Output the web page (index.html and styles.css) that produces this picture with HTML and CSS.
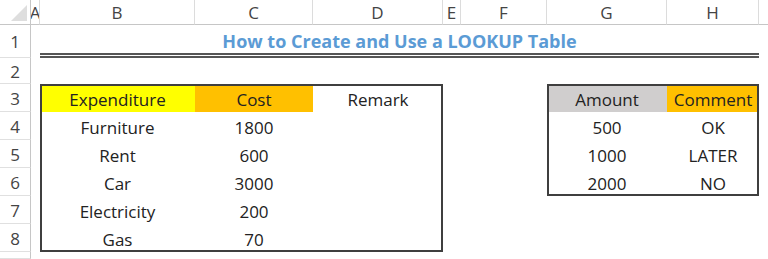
FILE: index.html
```html
<!DOCTYPE HTML>
<html>
<head>
    <meta charset="utf-8">
    <title>LOOKUP Table</title>
    <meta name="viewport" content="width=device-width, initial-scale=1">
    <link rel="stylesheet" href="styles.css">
</head>
<body>

<div class="sheet">
    <!-- column headers -->
    <div class="corner"></div>
    <div class="colhead">A</div>
    <div class="colhead">B</div>
    <div class="colhead">C</div>
    <div class="colhead">D</div>
    <div class="colhead">E</div>
    <div class="colhead">F</div>
    <div class="colhead">G</div>
    <div class="colhead">H</div>
    <div class="colhead last"></div>

    <!-- row headers -->
    <div class="rowhead r1">1</div>
    <div class="rowhead r2">2</div>
    <div class="rowhead r3">3</div>
    <div class="rowhead r4">4</div>
    <div class="rowhead r5">5</div>
    <div class="rowhead r6">6</div>
    <div class="rowhead r7">7</div>
    <div class="rowhead r8">8</div>
    <div class="rowhead r9"></div>

    <div class="title">How to Create and Use a LOOKUP Table</div>

    <div class="table expenses">
        <div class="cell hd yellow">Expenditure</div>
        <div class="cell hd orange">Cost</div>
        <div class="cell hd">Remark</div>

        <div class="cell">Furniture</div><div class="cell">1800</div><div class="cell"></div>
        <div class="cell">Rent</div><div class="cell">600</div><div class="cell"></div>
        <div class="cell">Car</div><div class="cell">3000</div><div class="cell"></div>
        <div class="cell">Electricity</div><div class="cell">200</div><div class="cell"></div>
        <div class="cell">Gas</div><div class="cell">70</div><div class="cell"></div>
    </div>

    <div class="table lookup">
        <div class="cell hd grey">Amount</div>
        <div class="cell hd orange">Comment</div>

        <div class="cell">500</div><div class="cell">OK</div>
        <div class="cell">1000</div><div class="cell">LATER</div>
        <div class="cell">2000</div><div class="cell">NO</div>
    </div>
</div>

</body>
</html>
```

FILE: styles.css
```css
body {
    margin:0;
    background:#fff;
    font-family:"Open Sans", "Noto Sans", sans-serif;
    font-size:17px;
    color:#222;
}
.sheet {
    display:grid;
    grid-template-columns: 31px 9px 155px 118px 130px 18px 86px 120px 92px 1fr;
    grid-template-rows: 25px 33px 26px repeat(6, 28px) 1fr;
    height:100vh;
    overflow:hidden;
}

/* headers */
.corner {
    position:relative;
    border-right:1px solid #c6c6c6;
    border-bottom:1px solid #c6c6c6;
}
.corner::after {
    content:"";
    position:absolute;
    right:3px; bottom:3px;
    width:16px; height:16px;
    background:#dedede;
    clip-path: polygon(100% 0, 100% 100%, 0 100%);
}
.colhead {
    display:flex;align-items:center;justify-content:center;
    color:#444;
    font-size:17px;
    border-right:1px solid #dcdcdc;
    border-bottom:1px solid #c6c6c6;
    overflow:hidden;
}
.colhead.last {border-right:none;}
.rowhead {
    grid-column:1;
    display:flex;align-items:center;justify-content:center;
    padding-top:1px;
    color:#444;
    font-size:17px;
    border-right:1px solid #c6c6c6;
    border-bottom:1px solid #e0e0e0;
}
.r1 {grid-row:2;} .r2 {grid-row:3;} .r3 {grid-row:4;}
.r4 {grid-row:5;} .r5 {grid-row:6;} .r6 {grid-row:7;}
.r7 {grid-row:8;} .r8 {grid-row:9;} .r9 {grid-row:10;}

/* sheet title in row 1 */
.title {
    grid-column:3 / 10;
    grid-row:2;
    display:flex;align-items:center;justify-content:center;
    padding-top:4px;
    font-weight:bold;
    font-size:18px;
    color:#5b9bd5;
    border-bottom:5px double #555;
}

/* bordered ranges */
.table {
    display:grid;
    grid-auto-rows:28px;
    outline:2px solid #3f3f3f;
    outline-offset:-2px;
}
.expenses {
    grid-column:3 / 6;
    grid-row:4 / 10;
    grid-template-columns:155px 118px 130px;
}
.lookup {
    grid-column:8 / 10;
    grid-row:4 / 8;
    grid-template-columns:120px 92px;
}
.cell {
    display:flex;align-items:center;justify-content:center;
    padding-top:2px;
    white-space:nowrap;
}
.yellow {background:#ffff00;}
.orange {background:#ffc000;}
.grey {background:#d0cece;}
```
